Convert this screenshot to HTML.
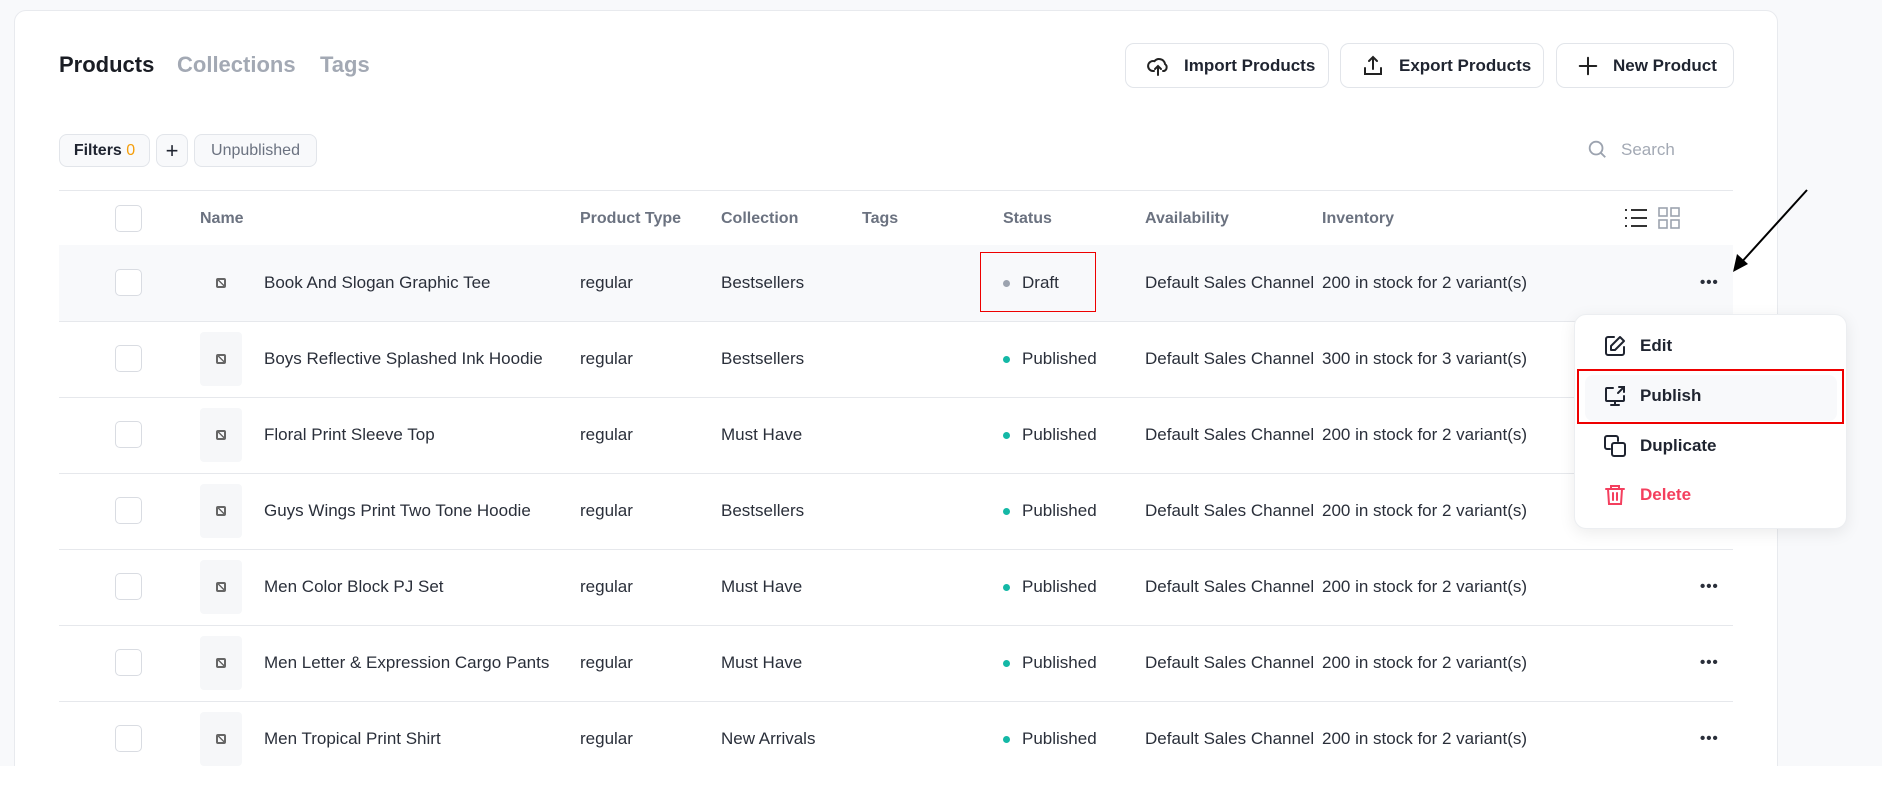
<!DOCTYPE html>
<html><head><meta charset="utf-8"><style>
*{box-sizing:border-box;margin:0;padding:0}
body{width:1882px;height:809px;background:#fff;font-family:"Liberation Sans",sans-serif;color:#1f2430;position:relative;overflow:hidden}
.bg{position:absolute;left:0;top:0;width:1882px;height:766px;background:#f8f9fb}
.card{position:absolute;left:14px;top:10px;width:1764px;height:780px;background:#fff;border:1px solid #e8eaee;border-radius:12px}
.abs{position:absolute}
.tab{position:absolute;top:52px;font-size:22px;font-weight:bold;color:#a3a9b4}
.btn{position:absolute;top:43px;height:45px;border:1px solid #e2e5ea;border-radius:9px;background:#fff;font-size:17px;font-weight:bold;display:flex;align-items:center;padding-left:20px;gap:14px}
.chip{position:absolute;top:134px;height:33px;border:1px solid #e2e5ea;border-radius:8px;background:#f8f9fb;font-size:16px;display:flex;align-items:center;justify-content:center}
.hl{position:absolute;left:59px;width:1674px;height:1px;background:#e6e8ec}
.th{position:absolute;top:210px;font-size:16px;font-weight:bold;color:#6b7280}
.row{position:absolute;left:59px;width:1674px;height:76px;font-size:17px;color:#2a2f3a}
.row span{position:absolute;top:28px;white-space:nowrap}
.cb{position:absolute;left:56px;top:24px;width:27px;height:27px;border:1.5px solid #d9dce2;border-radius:5px;background:#fff}
.img{position:absolute;left:141px;top:11px;width:42px;height:54px;background:#f6f7f9;border-radius:4px}
.img:after{content:"";position:absolute;left:16px;top:22px;width:10px;height:10px;border:2px solid #666;border-radius:2px;box-sizing:border-box;background:linear-gradient(45deg,transparent 45%,#666 45%,#666 60%,transparent 60%)}
.dot{position:absolute;top:35px;left:944px;width:7px;height:7px;border-radius:50%;background:#14b8a6}
.dots{position:absolute;left:1641px;top:29px;font-size:15px;font-weight:bold;letter-spacing:1px}
.mi{position:absolute;left:1640px;font-size:17px;font-weight:bold;color:#1f2430}
</style></head><body>
<div class="bg"></div>
<div class="card"></div>
<div class="tab" style="left:59px;color:#1a1d24">Products</div>
<div class="tab" style="left:177px">Collections</div>
<div class="tab" style="left:320px">Tags</div>

<div class="btn" style="left:1125px;width:204px"><svg width="24" height="24" viewBox="0 0 24 24" fill="none" stroke="#222" stroke-width="2" stroke-linecap="round"><path d="M8 17H7a5 5 0 1 1 1.5-9.8A6 6 0 0 1 19 10a4 4 0 0 1-1 7h-1"/><path d="M12 21v-9M9 15l3-3 3 3"/></svg>Import Products</div>
<div class="btn" style="left:1340px;width:204px"><svg width="24" height="24" viewBox="0 0 24 24" fill="none" stroke="#222" stroke-width="2" stroke-linecap="round"><path d="M12 15V3M8 7l4-4 4 4M4 14v6h16v-6"/></svg>Export Products</div>
<div class="btn" style="left:1556px;width:178px"><svg width="22" height="22" viewBox="0 0 24 24" fill="none" stroke="#222" stroke-width="2.2" stroke-linecap="round"><path d="M12 3v18M3 12h18"/></svg>New Product</div>

<div class="chip" style="left:59px;width:91px;font-weight:bold">Filters&nbsp;<span style="color:#f59e0b;font-weight:normal">0</span></div>
<div class="chip" style="left:156px;width:32px;font-size:22px">+</div>
<div class="chip" style="left:194px;width:123px;color:#6b7280">Unpublished</div>
<svg class="abs" style="left:1586px;top:138px" width="22" height="22" viewBox="0 0 24 24" fill="none" stroke="#9ca3af" stroke-width="2"><circle cx="11" cy="11" r="7"/><path d="M16 16l5 5"/></svg>
<div class="abs" style="left:1621px;top:140px;font-size:17px;color:#a3a9b4">Search</div>

<div class="hl" style="top:190px"></div>
<div class="abs" style="left:115px;top:205px;width:27px;height:27px;border:1.5px solid #d9dce2;border-radius:5px"></div>
<div class="th" style="left:200px">Name</div>
<div class="th" style="left:580px">Product Type</div>
<div class="th" style="left:721px">Collection</div>
<div class="th" style="left:862px">Tags</div>
<div class="th" style="left:1003px">Status</div>
<div class="th" style="left:1145px">Availability</div>
<div class="th" style="left:1322px">Inventory</div>
<svg class="abs" style="left:1624px;top:207px" width="24" height="22" viewBox="0 0 24 22" fill="none" stroke="#333" stroke-width="2"><path d="M7 3h16M7 11h16M7 19h16M1 3h2M1 11h2M1 19h2"/></svg>
<svg class="abs" style="left:1658px;top:207px" width="22" height="22" viewBox="0 0 22 22" fill="none" stroke="#9ca3af" stroke-width="1.6"><rect x="1" y="1" width="8" height="8"/><rect x="13" y="1" width="8" height="8"/><rect x="1" y="13" width="8" height="8"/><rect x="13" y="13" width="8" height="8"/></svg>
<div class="hl" style="top:245px"></div>

<div class="row" style="top:245px;background:#f8f9fb"><div class="cb"></div><div class="img" style="background:transparent"></div><span style="left:205px">Book And Slogan Graphic Tee</span><span style="left:521px">regular</span><span style="left:662px">Bestsellers</span><div class="dot" style="background:#9ca3af"></div><span style="left:963px">Draft</span><span style="left:1086px">Default Sales Channel</span><span style="left:1263px">200 in stock for 2 variant(s)</span><div class="dots">•••</div></div>
<div class="hl" style="top:321px"></div>
<div class="row" style="top:321px"><div class="cb"></div><div class="img"></div><span style="left:205px">Boys Reflective Splashed Ink Hoodie</span><span style="left:521px">regular</span><span style="left:662px">Bestsellers</span><div class="dot"></div><span style="left:963px">Published</span><span style="left:1086px">Default Sales Channel</span><span style="left:1263px">300 in stock for 3 variant(s)</span></div>
<div class="hl" style="top:397px"></div>
<div class="row" style="top:397px"><div class="cb"></div><div class="img"></div><span style="left:205px">Floral Print Sleeve Top</span><span style="left:521px">regular</span><span style="left:662px">Must Have</span><div class="dot"></div><span style="left:963px">Published</span><span style="left:1086px">Default Sales Channel</span><span style="left:1263px">200 in stock for 2 variant(s)</span></div>
<div class="hl" style="top:473px"></div>
<div class="row" style="top:473px"><div class="cb"></div><div class="img"></div><span style="left:205px">Guys Wings Print Two Tone Hoodie</span><span style="left:521px">regular</span><span style="left:662px">Bestsellers</span><div class="dot"></div><span style="left:963px">Published</span><span style="left:1086px">Default Sales Channel</span><span style="left:1263px">200 in stock for 2 variant(s)</span></div>
<div class="hl" style="top:549px"></div>
<div class="row" style="top:549px"><div class="cb"></div><div class="img"></div><span style="left:205px">Men Color Block PJ Set</span><span style="left:521px">regular</span><span style="left:662px">Must Have</span><div class="dot"></div><span style="left:963px">Published</span><span style="left:1086px">Default Sales Channel</span><span style="left:1263px">200 in stock for 2 variant(s)</span><div class="dots">•••</div></div>
<div class="hl" style="top:625px"></div>
<div class="row" style="top:625px"><div class="cb"></div><div class="img"></div><span style="left:205px">Men Letter &amp; Expression Cargo Pants</span><span style="left:521px">regular</span><span style="left:662px">Must Have</span><div class="dot"></div><span style="left:963px">Published</span><span style="left:1086px">Default Sales Channel</span><span style="left:1263px">200 in stock for 2 variant(s)</span><div class="dots">•••</div></div>
<div class="hl" style="top:701px"></div>
<div class="row" style="top:701px"><div class="cb"></div><div class="img"></div><span style="left:205px">Men Tropical Print Shirt</span><span style="left:521px">regular</span><span style="left:662px">New Arrivals</span><div class="dot"></div><span style="left:963px">Published</span><span style="left:1086px">Default Sales Channel</span><span style="left:1263px">200 in stock for 2 variant(s)</span><div class="dots">•••</div></div>
<div class="abs" style="left:0;top:766px;width:1882px;height:43px;background:#fff"></div>

<div class="abs" style="left:980px;top:252px;width:116px;height:60px;border:1.5px solid #e00"></div>

<div class="abs" style="left:1574px;top:314px;width:273px;height:215px;background:#fff;border:1px solid #eceef1;border-radius:12px;box-shadow:0 4px 16px rgba(0,0,0,0.08)"></div>
<div class="abs" style="left:1585px;top:375px;width:252px;height:46px;background:#f8f9fb;border-radius:8px"></div>
<div class="abs" style="left:1577px;top:369px;width:267px;height:55px;border:2px solid #e00"></div>
<svg class="abs" style="left:1603px;top:334px" width="24" height="24" viewBox="0 0 24 24" fill="none" stroke="#1f2430" stroke-width="2" stroke-linecap="round" stroke-linejoin="round"><path d="M11 3H5a2 2 0 0 0-2 2v14a2 2 0 0 0 2 2h14a2 2 0 0 0 2-2v-6"/><path d="M17 3l4 4-9 9H8v-4z"/></svg>
<div class="mi" style="top:336px">Edit</div>
<svg class="abs" style="left:1603px;top:384px" width="24" height="24" viewBox="0 0 24 24" fill="none" stroke="#1f2430" stroke-width="2" stroke-linecap="round"><path d="M10 4H4a1 1 0 0 0-1 1v11a1 1 0 0 0 1 1h16a1 1 0 0 0 1-1v-4M12 17v4M8 21h8M15 9l6-6M16 3h5v5"/></svg>
<div class="mi" style="top:386px">Publish</div>
<svg class="abs" style="left:1603px;top:434px" width="24" height="24" viewBox="0 0 24 24" fill="none" stroke="#1f2430" stroke-width="2" stroke-linecap="round"><path d="M15 7V4a2 2 0 0 0-2-2H4a2 2 0 0 0-2 2v9a2 2 0 0 0 2 2h3"/><rect x="9" y="9" width="13" height="13" rx="2"/></svg>
<div class="mi" style="top:436px">Duplicate</div>
<svg class="abs" style="left:1603px;top:483px" width="24" height="24" viewBox="0 0 24 24" fill="none" stroke="#f43f5e" stroke-width="2" stroke-linecap="round"><path d="M3 6h18M8 6V3h8v3M5 6l1 15h12l1-15M10 10v7M14 10v7"/></svg>
<div class="mi" style="top:485px;color:#f43f5e">Delete</div>

<svg class="abs" style="left:1725px;top:185px" width="90" height="92" viewBox="0 0 90 92"><path d="M82 5L14 80" stroke="#000" stroke-width="2"/><path d="M8 87l4-18 11 10z" fill="#000"/></svg>
</body></html>
